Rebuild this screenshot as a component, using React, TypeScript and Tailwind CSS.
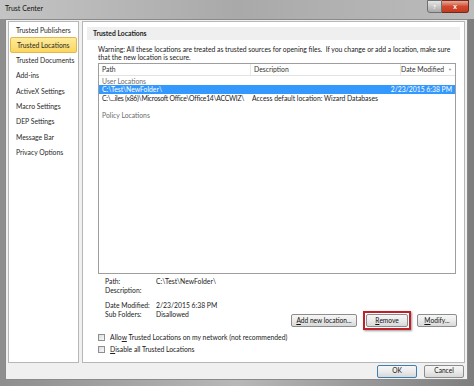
const navItems = [
  'Trusted Publishers',
  'Trusted Locations',
  'Trusted Documents',
  'Add-ins',
  'ActiveX Settings',
  'Macro Settings',
  'DEP Settings',
  'Message Bar',
  'Privacy Options',
];

function WinButton({ label, w, focused = false }: { label: React.ReactNode; w: string; focused?: boolean }) {
  return (
    <div
      className={`${w} h-[13px] flex items-center justify-center whitespace-nowrap rounded-[2px] border ${
        focused ? 'border-[#3c7fb1]' : 'border-[#8d8d8d]'
      } bg-gradient-to-b from-[#f6f6f6] via-[#ebebeb] to-[#d8d8d8] text-[6.6px] text-[#111]`}
    >
      {label}
    </div>
  );
}

function Check({ label }: { label: React.ReactNode }) {
  return (
    <div className="flex items-center gap-[5px] h-[12px] whitespace-nowrap">
      <div className="w-[7px] h-[7px] border border-[#8f8f8f] bg-gradient-to-br from-[#dcdcdc] to-[#f8f8f8]" />
      <span>{label}</span>
    </div>
  );
}

export default function App() {
  return (
    <div
      className="w-[474px] h-[386px] overflow-hidden bg-gradient-to-r from-[#8e8e8e] via-[#b8b8b8] to-[#7e7e7e] flex flex-col text-[#1e1e1e]"
      style={{ fontFamily: 'Lato, "Noto Sans", sans-serif' }}
    >
      {/* title bar */}
      <div className="h-[19px] flex items-start bg-gradient-to-r from-[#c4c4c4] via-[#a9a9a9] to-[#bcbcbc]">
        <span className="pl-[5px] pt-[3px] text-[7px] text-[#111]">Trust Center</span>
        <div className="ml-auto mr-[5px] flex">
          <div className="w-[15px] h-[13px] border border-[#6f6f6f] rounded-bl-[3px] bg-gradient-to-b from-[#e6e6e6] to-[#a9a9a9] flex items-center justify-center text-[6px] font-bold text-white">
            ?
          </div>
          <div className="w-[27px] h-[13px] border border-l-0 border-[#6f2a20] rounded-br-[3px] bg-gradient-to-b from-[#e9a99a] via-[#d0492e] to-[#c43a20] flex items-center justify-center text-[7px] font-bold text-white">
            x
          </div>
        </div>
      </div>

      {/* client area */}
      <div className="mx-[5px] mr-[6px] h-[361px] border border-[#8a8a8a] bg-[#f0f0f0] flex flex-col">
        <div className="flex gap-[3px] px-[2px] pt-[1px] h-[343px]">
          {/* nav */}
          <div className="w-[73px] border border-[#b7b7b7] bg-white px-[1px] text-[6.8px] text-[#2a2a2a] whitespace-nowrap">
            {navItems.map((item) => (
              <div
                key={item}
                className={`h-[15.3px] flex items-center pl-[6px] ${
                  item === 'Trusted Locations'
                    ? 'border border-[#e2b94f] rounded-[2px] bg-gradient-to-b from-[#fdeb9c] to-[#fbd65c]'
                    : ''
                }`}
              >
                {item}
              </div>
            ))}
          </div>

          {/* right panel */}
          <div className="flex-1 border border-[#b7b7b7] bg-white flex flex-col text-[6.8px]">
            <div className="mx-[4px] mt-[5px] h-[13px] bg-[#efefef] flex items-center pl-[6px] font-bold text-[6.8px] text-[#222]">
              Trusted Locations
            </div>
            <div className="pl-[15px] pr-[6px] mt-[5px] leading-[8px] text-[#222]">
              Warning: All these locations are treated as trusted sources for opening files.&nbsp; If you change or add a location, make sure that the new location is secure.
            </div>

            {/* list */}
            <div className="ml-[15px] mr-[8px] mt-[2px] h-[211px] border border-[#9e9e9e] bg-white whitespace-nowrap">
              <div className="h-[12px] flex items-center border-b border-[#e3e3e3] text-[#333]">
                <div className="w-[152px] pl-[3px] border-r border-[#e8e8e8] h-full flex items-center">Path</div>
                <div className="w-[150px] pl-[3px] border-r border-[#e8e8e8] h-full flex items-center">Description</div>
                <div className="flex-1 h-full flex items-center justify-end pr-[3px] gap-[4px]">
                  Date Modified <span className="text-[4px] text-[#999]">▼</span>
                </div>
              </div>
              <div className="h-[8.5px] flex items-center pl-[3px] text-[#6d6d6d] mt-[0.5px]">User Locations</div>
              <div className="h-[8.5px] flex items-center bg-[#3399ff] text-white px-[3px]">
                <span>C:\Test\NewFolder\</span>
                <span className="ml-auto">2/23/2015 6:38 PM</span>
              </div>
              <div className="h-[9px] flex items-center text-[#222]">
                <div className="w-[152px] pl-[3px] tracking-[-0.25px]">C:\...iles (x86)\Microsoft Office\Office14\ACCWIZ\</div>
                <div className="pl-[1px]">Access default location: Wizard Databases</div>
              </div>
              <div className="h-[8px]" />
              <div className="h-[9px] flex items-center pl-[3px] text-[#6d6d6d]">Policy Locations</div>
            </div>

            {/* details */}
            <div className="pl-[22px] mt-[3px] text-[#222] leading-[9px] whitespace-nowrap">
              <div className="flex">
                <span className="w-[51px]">Path:</span>
                <span>C:\Test\NewFolder\</span>
              </div>
              <div className="flex">
                <span className="w-[51px]">Description:</span>
              </div>
              <div className="flex mt-[6px]">
                <span className="w-[51px]">Date Modified:</span>
                <span>2/23/2015 6:38 PM</span>
              </div>
              <div className="flex">
                <span className="w-[51px]">Sub Folders:</span>
                <span>Disallowed</span>
              </div>
            </div>

            <div className="flex justify-end gap-[6px] pr-[7px] -mt-[5px]">
              <WinButton w="w-[66px]" label={<><u>A</u>dd new location...</>} />
              <div className="border-2 border-[#c0202a] p-[1px] -my-[3px] shadow-[1px_1px_2px_rgba(0,0,0,0.4)]">
                <WinButton w="w-[42px]" label={<><u>R</u>emove</>} />
              </div>
              <WinButton w="w-[40px]" label={<><u>M</u>odify...</>} />
            </div>

            <div className="pl-[15px] mt-[4px] text-[#222]">
              <Check label={<>Allo<u>w</u> Trusted Locations on my network (not recommended)</>} />
              <Check label={<><u>D</u>isable all Trusted Locations</>} />
            </div>
          </div>
        </div>

        {/* bottom bar */}
        <div className="flex-1 flex items-center justify-end gap-[7px] pr-[3px]">
          <WinButton w="w-[40px]" focused label="OK" />
          <WinButton w="w-[40px]" label="Cancel" />
        </div>
      </div>
    </div>
  );
}
